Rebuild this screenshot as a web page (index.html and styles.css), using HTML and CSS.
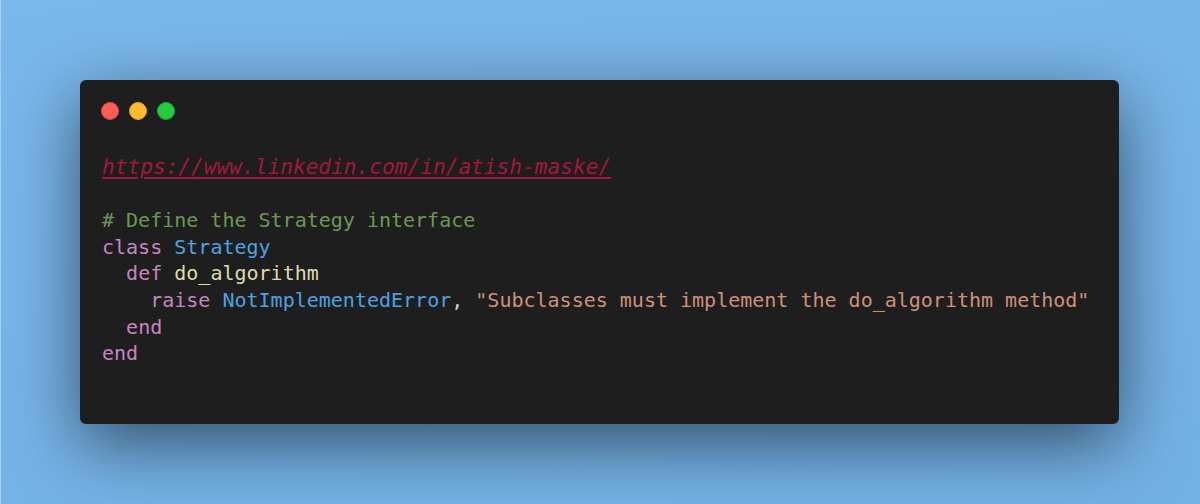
FILE: index.html
```html
<!DOCTYPE html>
<html lang="en">
<head>
<meta charset="utf-8">
<title>Strategy</title>
<link rel="stylesheet" href="styles.css">
</head>
<body>
<main class="canvas">
  <section class="window">
    <header class="controls">
      <span class="dot dot-red"></span>
      <span class="dot dot-yellow"></span>
      <span class="dot dot-green"></span>
    </header>
    <pre class="code"><span class="line url-line"><a class="url" href="#">https://www.linkedin.com/in/atish-maske/</a></span>
<span class="line"> </span>
<span class="line"><span class="cm"># Define the Strategy interface</span></span>
<span class="line"><span class="kw">class</span> <span class="cls">Strategy</span></span>
<span class="line">  <span class="kw">def</span> <span class="fn">do_algorithm</span></span>
<span class="line">    <span class="kw">raise</span> <span class="cls">NotImplementedError</span>, <span class="str">"Subclasses must implement the do_algorithm method"</span></span>
<span class="line">  <span class="kw">end</span></span>
<span class="line"><span class="kw">end</span></span></pre>
  </section>
</main>
</body>
</html>
```

FILE: styles.css
```css
html, body {
  margin: 0;
  padding: 0;
}

body {
  width: 1200px;
  height: 504px;
  overflow: hidden;
  background: #78b5e9;
}

.canvas {
  box-sizing: border-box;
  width: 1200px;
  height: 504px;
  padding: 80px 81px 0 79px;
  background: linear-gradient(170deg, #7ab7ea 0%, #73b0e4 100%);
  border-left: 1px solid #a9d0f2;
}

.window {
  box-sizing: border-box;
  width: 1039px;
  height: 344px;
  background: #1e1e1e;
  border-radius: 6px;
  box-shadow: 0 20px 68px rgba(0, 0, 0, 0.55);
  padding: 22px 22px 0 21px;
}

.controls {
  display: flex;
  gap: 10px;
  height: 18px;
}

.dot {
  width: 18px;
  height: 18px;
  border-radius: 50%;
  box-sizing: border-box;
}

.dot-red { background: #ff5f56; border: 1px solid #e0443e; }
.dot-yellow { background: #ffbd2e; border: 1px solid #dea123; }
.dot-green { background: #27c93f; border: 1px solid #1aab29; }

.code {
  margin: 34px 0 0 1px;
  font-family: "DejaVu Sans Mono", monospace;
  font-size: 20px;
  line-height: 26.6px;
  color: #d4d4d4;
  white-space: pre;
}

.line {
  display: inline;
}

.url {
  font-size: 21.15px;
  font-style: italic;
  color: #a3183d;
  text-decoration: underline;
  text-underline-offset: 3px;
}

.cm { color: #6a9955; }
.kw { color: #c586c0; }
.cls { color: #4fa1e2; }
.fn { color: #dcdcaa; }
.str { color: #ce9178; }
```
